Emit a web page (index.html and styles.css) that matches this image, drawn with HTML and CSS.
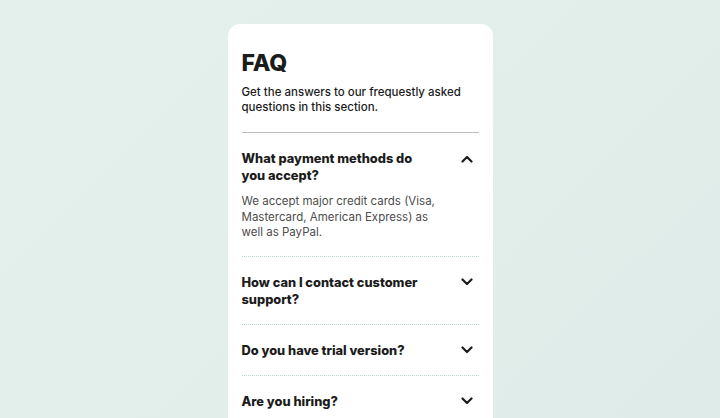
FILE: index.html
```html
<!DOCTYPE html>
<html>
<head>
<meta charset="utf-8">
<link rel="stylesheet" href="styles.css">
</head>
<body>
<div class="page">
  <section class="card">
    <h1 class="title">FAQ</h1>
    <p class="subtitle">Get the answers to our frequestly asked questions in this section.</p>
    <div class="list">
      <div class="item open">
        <div class="q">
          <span class="q-text">What payment methods do you accept?</span>
          <span class="icon"><svg width="12" height="8" viewBox="0 0 12 8"><path d="M1.5 6.5 L6 2 L10.5 6.5" fill="none" stroke="#1c1c1c" stroke-width="2.2" stroke-linecap="round" stroke-linejoin="round"/></svg></span>
        </div>
        <p class="a">We accept major credit cards (Visa, Mastercard, American Express) as well as PayPal.</p>
      </div>
      <div class="item">
        <div class="q">
          <span class="q-text">How can I contact customer support?</span>
          <span class="icon"><svg width="12" height="8" viewBox="0 0 12 8"><path d="M1.5 1.5 L6 6 L10.5 1.5" fill="none" stroke="#1c1c1c" stroke-width="2.2" stroke-linecap="round" stroke-linejoin="round"/></svg></span>
        </div>
      </div>
      <div class="item">
        <div class="q">
          <span class="q-text">Do you have trial version?</span>
          <span class="icon"><svg width="12" height="8" viewBox="0 0 12 8"><path d="M1.5 1.5 L6 6 L10.5 1.5" fill="none" stroke="#1c1c1c" stroke-width="2.2" stroke-linecap="round" stroke-linejoin="round"/></svg></span>
        </div>
      </div>
      <div class="item">
        <div class="q">
          <span class="q-text">Are you hiring?</span>
          <span class="icon"><svg width="12" height="8" viewBox="0 0 12 8"><path d="M1.5 1.5 L6 6 L10.5 1.5" fill="none" stroke="#1c1c1c" stroke-width="2.2" stroke-linecap="round" stroke-linejoin="round"/></svg></span>
        </div>
      </div>
    </div>
  </section>
</div>
</body>
</html>
```
FILE: styles.css
```css
* { box-sizing: border-box; }
html, body {
  margin: 0;
  height: 100%;
  overflow: hidden;
}
body {
  background: linear-gradient(135deg, #e4f0ec 0%, #e1eeea 60%, #dfebe8 100%);
  font-family: "Inter", "Noto Sans", sans-serif;
  color: #1c1c1c;
}
.page {
  display: flex;
  justify-content: center;
  padding-top: 24px;
}
.card {
  width: 265px;
  background: #fff;
  border-radius: 12px;
  padding: 24px 14px 40px 14px;
  min-height: 500px;
}
.title {
  margin: 0;
  font-size: 23px;
  line-height: 30px;
  font-weight: 800;
  letter-spacing: -0.2px;
}
.subtitle {
  margin: 7px 0 0 0;
  font-size: 11.5px;
  line-height: 15px;
  font-weight: 500;
  color: #1c1c1c;
  padding-bottom: 17px;
  border-bottom: 1px solid #bdbdbd;
}
.item {
  padding: 17px 0 16px 0;
  border-bottom: 1px dotted #b9d2cc;
}
.item.open { padding-bottom: 15px; }
.q {
  display: flex;
  justify-content: space-between;
  align-items: flex-start;
}
.q-text {
  font-size: 12.8px;
  line-height: 17px;
  font-weight: 800;
  max-width: 192px;
}
.icon {
  width: 22px;
  height: 17px;
  display: flex;
  align-items: center;
  justify-content: center;
  flex-shrink: 0;
  margin-right: 1px;
}
.a {
  margin: 10px 0 0 0;
  font-size: 11.5px;
  line-height: 15.5px;
  color: #4d4d4d;
  max-width: 205px;
}
```
